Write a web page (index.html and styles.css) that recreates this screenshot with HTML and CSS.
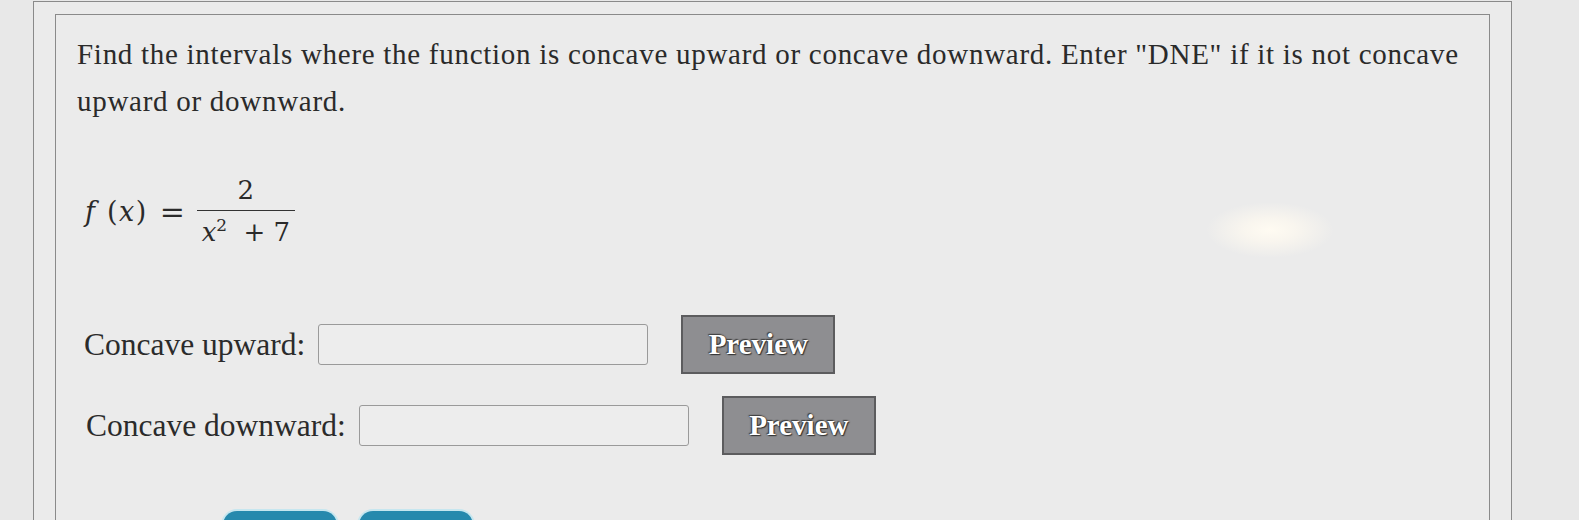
FILE: index.html
```html
<!DOCTYPE html>
<html>
<head>
<meta charset="utf-8">
<link rel="stylesheet" href="styles.css">
</head>
<body>
<div class="outer">
  <div class="inner">
    <p class="question">Find the intervals where the function is concave upward or concave downward. Enter "DNE" if it is not concave upward or downward.</p>
    <div class="math">
      <span class="fn"><i>f</i>&#8196;(<i>x</i>)</span>
      <span class="eq">=</span>
      <span class="frac">
        <span class="num">2</span>
        <span class="den"><i>x</i><sup>2</sup> + 7</span>
      </span>
    </div>
    <div class="row row-up">
      <label class="lbl">Concave upward:</label>
      <input class="ans" type="text">
      <button class="preview">Preview</button>
    </div>
    <div class="row row-down">
      <label class="lbl">Concave downward:</label>
      <input class="ans" type="text">
      <button class="preview">Preview</button>
    </div>
    <div class="actions">
      <span class="tbtn"></span>
      <span class="tbtn"></span>
    </div>
  </div>
</div>
</body>
</html>
```
FILE: styles.css
```css
html, body {
  margin: 0;
  height: 520px;
  overflow: hidden;
}
body {
  background: #e8e8e8;
  font-family: "Liberation Serif", "Times New Roman", serif;
  color: #2b2b2b;
}
.outer {
  margin-left: 33px;
  margin-top: 1px;
  width: 1479px;
  height: 560px;
  border: 1.5px solid #8a8a8a;
  border-bottom: none;
  padding: 12px 21px 0 21px;
  box-sizing: border-box;
  background: radial-gradient(ellipse 64px 28px at 1236px 228px, #fffbf2 0%, rgba(255,250,240,0.7) 40%, rgba(236,236,236,0) 100%), #ebebeb;
}
.inner {
  border: 1.2px solid #8a8a8a;
  border-bottom: none;
  height: 560px;
  padding: 16px 24px 0 21px;
  box-sizing: border-box;
}
.question {
  margin: 0;
  font-size: 29px;
  line-height: 47px;
  letter-spacing: 0.72px;
  color: #2a2a2a;
}
.math {
  display: flex;
  align-items: center;
  margin-top: 50px;
  margin-left: 8px;
  color: #2a2a2a;
}
.fn {
  font-family: "DejaVu Serif", "Liberation Serif", serif;
  font-size: 27px;
  letter-spacing: 1.5px;
}
.eq {
  margin: 0 12px 0 12px;
  font-size: 30px;
  font-family: "DejaVu Serif", serif;
}
.frac {
  display: inline-flex;
  flex-direction: column;
  align-items: center;
  font-family: "DejaVu Serif", "Liberation Serif", serif;
  font-size: 26px;
}
.num {
  padding: 0 0 5px;
  border-bottom: 1.5px solid #333;
  width: 98px;
  text-align: center;
}
.den {
  padding-top: 4px;
}
.den sup {
  font-size: 17px;
  vertical-align: 10px;
  margin-right: 8px;
}
.row {
  display: flex;
  align-items: center;
}
.row-up {
  margin-top: 68px;
  margin-left: 7px;
}
.row-down {
  margin-top: 22px;
  margin-left: 9px;
}
.lbl {
  font-size: 31.5px;
  color: #2b2b2b;
  margin-right: 13px;
}
.ans {
  width: 330px;
  height: 41px;
  box-sizing: border-box;
  border: 1.5px solid #9a9a9a;
  border-radius: 3px;
  background: #ededed;
  margin-right: 33px;
}
.preview {
  width: 154px;
  height: 59px;
  box-sizing: border-box;
  background: #8e8e91;
  border: 2px solid #5c5c5e;
  color: #fff;
  font-family: "Liberation Serif", "Times New Roman", serif;
  font-size: 29px;
  font-weight: bold;
  text-shadow: 0 0 2px #333, 1px 1px 1px #333, -1px -1px 1px #444;
  padding: 0;
}
.actions {
  display: flex;
  gap: 22px;
  margin-top: 56px;
  margin-left: 146px;
}
.tbtn {
  width: 114px;
  height: 30px;
  background: #2689ad;
  border-radius: 14px 14px 0 0;
  box-shadow: 0 0 0 2px #c6e6ef;
}
```
